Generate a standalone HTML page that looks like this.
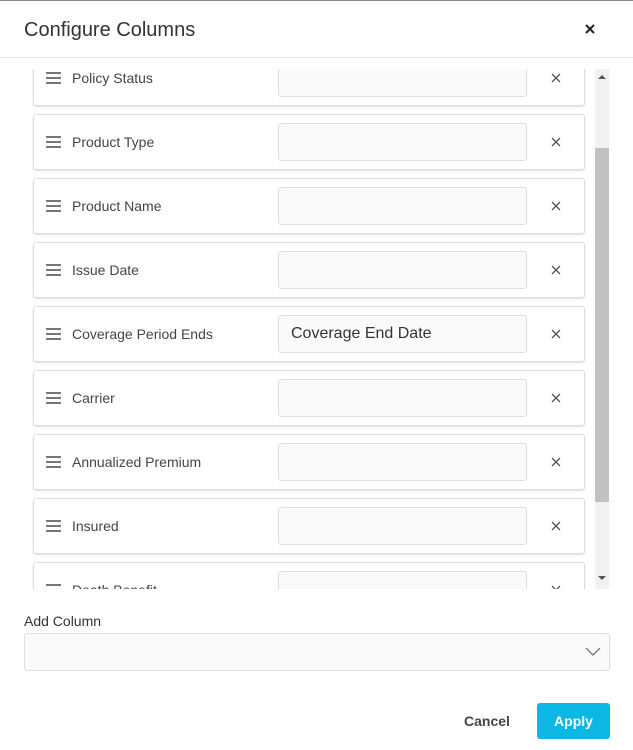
<!DOCTYPE html>
<html><head><style>
*{box-sizing:border-box;margin:0;padding:0}
body{width:633px;height:750px;background:#fff;font-family:"Liberation Sans",sans-serif;position:relative;overflow:hidden}
.topl{position:absolute;left:0;right:0;top:0;height:1px;background:#888}
.title{position:absolute;left:24px;top:19px;font-size:20px;color:#333}
.sep{position:absolute;left:0;right:0;top:57px;height:1px;background:#e8e8e8}
.scroll{position:absolute;left:0;top:69px;width:633px;height:520px;overflow:hidden}
.card{position:absolute;left:33px;width:552px;height:56px;border:1px solid #ddd;border-radius:3px;box-shadow:0 1px 2px rgba(0,0,0,.12);background:#fff}
.ham{position:absolute;left:12px;top:21px;width:15px;height:12px;border-top:2px solid #777;border-bottom:2px solid #777}
.ham:after{content:"";position:absolute;left:0;right:0;top:3px;height:2px;background:#777}
.lbl{position:absolute;left:38px;top:19px;font-size:14px;color:#444}
.inp{position:absolute;left:244px;top:8px;width:249px;height:38px;border:1px solid #ddd;border-radius:3px;background:#fafafa;font-size:16px;color:#333;padding:9px 12px}
.x{position:absolute;left:517px;top:22px}
.sb{position:absolute;left:595px;top:0;width:14px;height:520px;background:#f1f1f1}
.thumb{position:absolute;left:0;top:79px;width:14px;height:354px;background:#c1c1c1}
.au{position:absolute;left:3px;top:6px;border:4px solid transparent;border-bottom:4px solid #555;border-top:0}
.ad{position:absolute;left:3px;top:507px;border:4px solid transparent;border-top:4px solid #555;border-bottom:0}
.addl{position:absolute;left:24px;top:613px;font-size:14px;color:#333}
.sel{position:absolute;left:24px;top:633px;width:586px;height:38px;border:1px solid #ddd;border-radius:3px;background:#fafafa}
.cancel{position:absolute;left:464px;top:713px;font-size:14px;font-weight:bold;color:#444}
.apply{position:absolute;left:537px;top:703px;width:73px;height:36px;background:#0db7e3;border-radius:3px;color:#fff;font-weight:bold;font-size:14px;text-align:center;line-height:36px}
</style></head><body>
<div class="topl"></div>
<div class="title">Configure Columns</div>
<svg style="position:absolute;left:585px;top:24px" width="10" height="10"><path d="M1 1L9 9M9 1L1 9" stroke="#222" stroke-width="2"/></svg>
<div class="sep"></div>
<div class="scroll">
<div class="card" style="top:-19px"><div class="ham"></div><div class="lbl">Policy Status</div><div class="inp"></div><svg class="x" width="10" height="10"><path d="M1 1L9 9M9 1L1 9" stroke="#555" stroke-width="1.3"/></svg></div>
<div class="card" style="top:45px"><div class="ham"></div><div class="lbl">Product Type</div><div class="inp"></div><svg class="x" width="10" height="10"><path d="M1 1L9 9M9 1L1 9" stroke="#555" stroke-width="1.3"/></svg></div>
<div class="card" style="top:109px"><div class="ham"></div><div class="lbl">Product Name</div><div class="inp"></div><svg class="x" width="10" height="10"><path d="M1 1L9 9M9 1L1 9" stroke="#555" stroke-width="1.3"/></svg></div>
<div class="card" style="top:173px"><div class="ham"></div><div class="lbl">Issue Date</div><div class="inp"></div><svg class="x" width="10" height="10"><path d="M1 1L9 9M9 1L1 9" stroke="#555" stroke-width="1.3"/></svg></div>
<div class="card" style="top:237px"><div class="ham"></div><div class="lbl">Coverage Period Ends</div><div class="inp">Coverage End Date</div><svg class="x" width="10" height="10"><path d="M1 1L9 9M9 1L1 9" stroke="#555" stroke-width="1.3"/></svg></div>
<div class="card" style="top:301px"><div class="ham"></div><div class="lbl">Carrier</div><div class="inp"></div><svg class="x" width="10" height="10"><path d="M1 1L9 9M9 1L1 9" stroke="#555" stroke-width="1.3"/></svg></div>
<div class="card" style="top:365px"><div class="ham"></div><div class="lbl">Annualized Premium</div><div class="inp"></div><svg class="x" width="10" height="10"><path d="M1 1L9 9M9 1L1 9" stroke="#555" stroke-width="1.3"/></svg></div>
<div class="card" style="top:429px"><div class="ham"></div><div class="lbl">Insured</div><div class="inp"></div><svg class="x" width="10" height="10"><path d="M1 1L9 9M9 1L1 9" stroke="#555" stroke-width="1.3"/></svg></div>
<div class="card" style="top:493px"><div class="ham"></div><div class="lbl">Death Benefit</div><div class="inp"></div><svg class="x" width="10" height="10"><path d="M1 1L9 9M9 1L1 9" stroke="#555" stroke-width="1.3"/></svg></div>
<div class="sb"><div class="thumb"></div><div class="au"></div><div class="ad"></div></div>
</div>
<div class="addl">Add Column</div>
<div class="sel"><svg style="position:absolute;left:560px;top:13px" width="16" height="10"><path d="M1 1 L8 8 L15 1" fill="none" stroke="#666" stroke-width="1.2"/></svg></div>
<div class="cancel">Cancel</div>
<div class="apply">Apply</div>
</body></html>
